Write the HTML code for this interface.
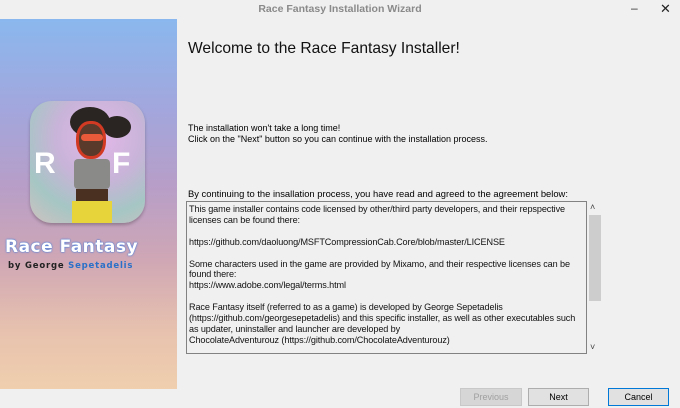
<!DOCTYPE html>
<html><head><meta charset="utf-8"><style>
*{margin:0;padding:0;box-sizing:border-box}
body{width:680px;height:408px;background:#f0f0f0;font-family:"Liberation Sans",Arial,sans-serif;position:relative;overflow:hidden;color:#000}
.t{position:absolute;white-space:nowrap}
#title{left:0;width:680px;top:3px;text-align:center;font-size:10.5px;font-weight:bold;color:#8a8a8a}
#left{position:absolute;left:0;top:19px;width:177px;height:370px;background:linear-gradient(#8ab8ee 0%,#a3a6dc 25%,#b79ec8 45%,#cfa7b5 65%,#e8c2ae 85%,#efcfae 100%)}
#icon{position:absolute;left:30px;top:101px;width:115px;height:122px;border-radius:22px;background:radial-gradient(circle at 60% 30%,#e4b8ea,#c8b4d8 40%,#a5c6c4 70%,#d0c2c0);box-shadow:0 2px 3px rgba(0,0,0,.25);overflow:hidden}
.scroll{position:absolute;left:186px;top:201px;width:401px;height:153px;border:1px solid #828282;background:#f0f0f0;font-size:9.1px;line-height:10.9px;padding:2px 0 0 2px;color:#111;letter-spacing:-0.1px}
.btn{position:absolute;top:388px;height:18px;border:1px solid #adadad;background:#e1e1e1;font-size:9px;text-align:center;line-height:16px}
</style></head><body>
<div id="title" class="t">Race Fantasy Installation Wizard</div>
<div class="t" style="left:631px;top:1px;font-size:12px;color:#333">–</div>
<div class="t" style="left:660px;top:1px;font-size:13px;color:#222">✕</div>
<div id="left"></div>
<div id="icon">
 <div style="position:absolute;left:40px;top:6px;width:40px;height:30px;border-radius:50%;background:#2a2522"></div>
 <div style="position:absolute;left:73px;top:15px;width:28px;height:22px;border-radius:50%;background:#2a2522"></div>
 <div style="position:absolute;left:46px;top:20px;width:30px;height:38px;border-radius:45%;background:#5a3a2a;border:3px solid #d23a24"></div>
 <div style="position:absolute;left:51px;top:33px;width:22px;height:7px;border-radius:4px;background:#e85a3a"></div>
 <div style="position:absolute;left:44px;top:58px;width:36px;height:30px;background:#8a8a88;border-radius:4px"></div>
 <div style="position:absolute;left:46px;top:88px;width:32px;height:12px;background:#4a3020"></div>
 <div style="position:absolute;left:42px;top:100px;width:40px;height:22px;background:#e6d43a"></div>
 <div style="position:absolute;left:4px;top:46px;font:bold 30px 'Liberation Sans',sans-serif;color:#fff;letter-spacing:1px">R</div>
 <div style="position:absolute;left:82px;top:46px;font:bold 30px 'Liberation Sans',sans-serif;color:#fff">F</div>
</div>
<div class="t" style="left:5px;top:237px;font:bold 17px 'DejaVu Sans',sans-serif;color:#fff;letter-spacing:0.5px;text-shadow:0 0 2px #3a7ae0,0 0 1px #3a7ae0">Race Fantasy</div>
<div class="t" style="left:8px;top:261px;font:bold 8.5px 'DejaVu Sans',sans-serif;color:#222;letter-spacing:0.8px">by George <span style="color:#2a70c8">Sepetadelis</span></div>

<div class="t" style="left:188px;top:40px;font-size:15.6px;color:#111">Welcome to the Race Fantasy Installer!</div>
<div class="t" style="left:188px;top:123px;font-size:9px;line-height:11px">The installation won't take a long time!<br>Click on the "Next" button so you can continue with the installation process.</div>
<div class="t" style="left:188px;top:188px;font-size:9.4px">By continuing to the insallation process, you have read and agreed to the agreement below:</div>
<div class="scroll">This game installer contains code licensed by other/third party developers, and their repspective<br>licenses can be found there:<br><br>https://github.com/daoluong/MSFTCompressionCab.Core/blob/master/LICENSE<br><br>Some characters used in the game are provided by Mixamo, and their respective licenses can be<br>found there:<br>https://www.adobe.com/legal/terms.html<br><br>Race Fantasy itself (referred to as a game) is developed by George Sepetadelis<br>(https://github.com/georgesepetadelis) and this specific installer, as well as other executables such<br>as updater, uninstaller and launcher are developed by<br>ChocolateAdventurouz (https://github.com/ChocolateAdventurouz)</div>
<div class="t" style="left:590px;top:202px;font-size:9px;color:#444">˄</div>
<div style="position:absolute;left:589px;top:215px;width:12px;height:86px;background:#cdcdcd"></div>
<div class="t" style="left:590px;top:342px;font-size:9px;color:#444">˅</div>

<div class="btn" style="left:460px;width:62px;color:#a0a0a0;background:#d6d6d6;border-color:#c8c8c8">Previous</div>
<div class="btn" style="left:528px;width:61px">Next</div>
<div class="btn" style="left:608px;width:61px;border:1px solid #0078d7">Cancel</div>
</body></html>
